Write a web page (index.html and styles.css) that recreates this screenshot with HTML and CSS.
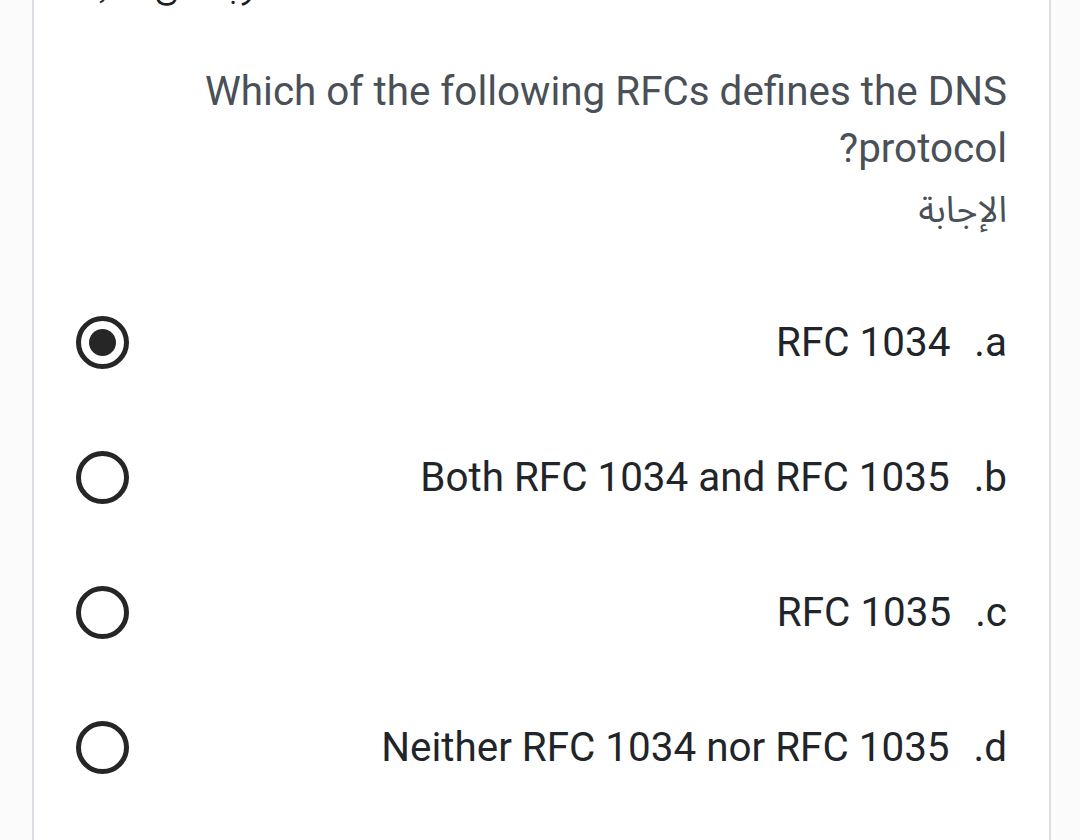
FILE: index.html
```html
<!DOCTYPE html>
<html lang="ar" dir="rtl">
<head>
<meta charset="utf-8">
<title>Question</title>
<link rel="stylesheet" href="styles.css">
</head>
<body>
<div class="card">
  <div class="grade"><span>الدرجة من ١٫٠٠</span></div>
  <div class="qtext">Which of the following RFCs defines the DNS protocol?</div>
  <div class="prompt">الإجابة</div>
  <div class="answers">
    <div class="opt">
      <span class="num">a.</span><span class="txt">RFC 1034</span>
      <span class="radio checked"></span>
    </div>
    <div class="opt">
      <span class="num">b.</span><span class="txt">Both RFC 1034 and RFC 1035</span>
      <span class="radio"></span>
    </div>
    <div class="opt">
      <span class="num">c.</span><span class="txt">RFC 1035</span>
      <span class="radio"></span>
    </div>
    <div class="opt">
      <span class="num">d.</span><span class="txt">Neither RFC 1034 nor RFC 1035</span>
      <span class="radio"></span>
    </div>
  </div>
</div>
</body>
</html>
```
FILE: styles.css
```css
html, body {
  margin: 0;
  padding: 0;
  background: #fbfbfb;
  height: 100%;
  overflow: hidden;
}
body {
  font-family: Roboto, "Noto Sans", "DejaVu Sans", sans-serif;
}
.card {
  box-sizing: border-box;
  margin-left: 32px;
  margin-right: 29px;
  width: 1019px;
  min-height: 900px;
  background: #ffffff;
  border-left: 2px solid #dcdde3;
  border-right: 2px solid #dcdde3;
  padding: 0 42px 0 42px;
}
.grade {
  margin-top: -32px;
  height: 38px;
  font-size: 34px;
  line-height: 38px;
  color: #1d2125;
  text-align: left;
  padding-left: 4px;
  font-family: "Noto Sans Arabic", "Noto Naskh Arabic", "DejaVu Sans", sans-serif;
}
.qtext {
  margin-top: 57px;
  margin-left: 120px;
  font-size: 40.4px;
  line-height: 57px;
  color: #495057;
}
.prompt {
  margin-top: 12px;
  font-size: 36px;
  line-height: 44px;
  color: #495057;
  font-family: "Noto Sans Arabic", "Noto Naskh Arabic", "DejaVu Sans", sans-serif;
}
.answers {
  margin-top: 82px;
  display: flex;
  flex-direction: column;
  gap: 81px;
}
.opt {
  display: flex;
  align-items: center;
  height: 54px;
  font-size: 40.4px;
  color: #212529;
}
.num {
  margin-left: 24px;
}
.radio {
  margin-right: auto;
  box-sizing: border-box;
  width: 53px;
  height: 53px;
  border: 5px solid #262626;
  border-radius: 50%;
  display: flex;
  align-items: center;
  justify-content: center;
}
.radio.checked::after {
  content: "";
  width: 27px;
  height: 27px;
  border-radius: 50%;
  background: #262626;
}
```
